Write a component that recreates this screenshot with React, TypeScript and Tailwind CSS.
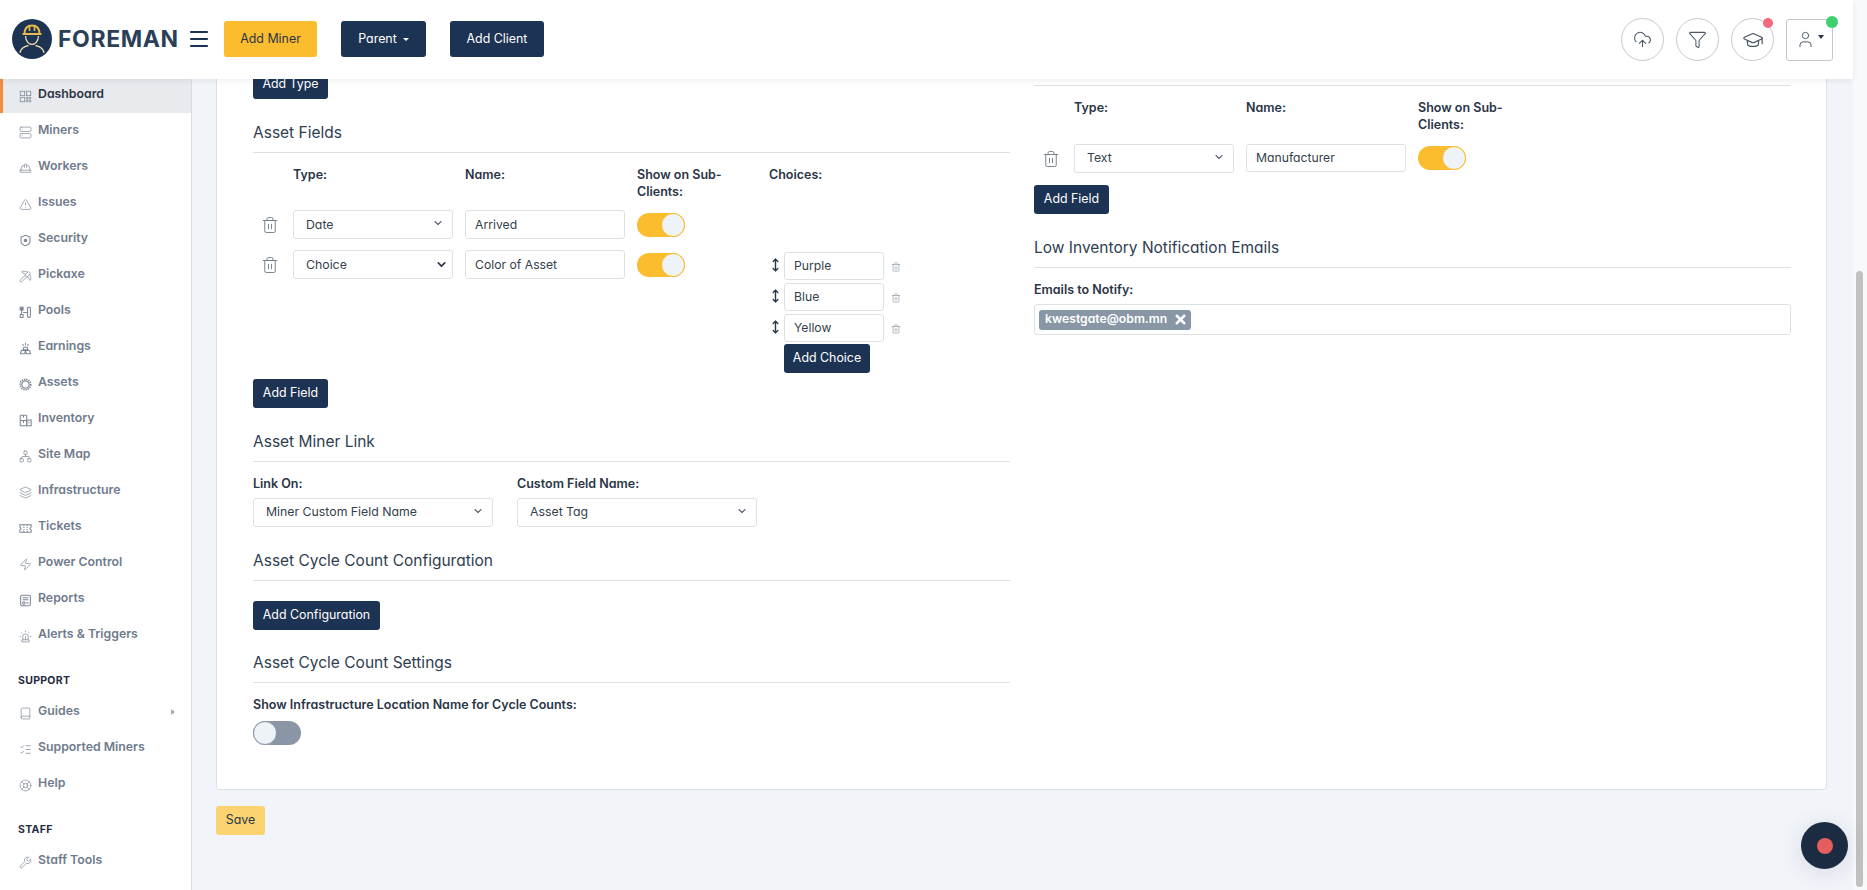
import type { ReactNode } from "react";
import {
  Book,
  ChevronDown,
  CloudUpload,
  Funnel,
  GraduationCap,
  HardHat,
  LifeBuoy,
  ListChecks,
  Menu,
  MoveVertical,
  Network,
  Pickaxe,
  Server,
  Layers,
  Siren,
  Trash2,
  TriangleAlert,
  User,
  Wrench,
  X,
  Zap,
} from "lucide-react";

type IconProps = { size?: number; strokeWidth?: number; className?: string };

function Glyph({ size = 14, strokeWidth = 1.2, className, children }: IconProps & { children: ReactNode }) {
  return (
    <svg width={size} height={size} viewBox="0 0 16 16" fill="none" stroke="currentColor" strokeWidth={strokeWidth} className={className}>
      {children}
    </svg>
  );
}

const DashboardIcon = (p: IconProps) => (
  <Glyph {...p} strokeWidth={0.9}>
    <rect x="1.500" y="1.500" width="5.500" height="5.500" />
    <rect x="9" y="1.500" width="5.500" height="5.500" />
    <rect x="1.500" y="9" width="5.500" height="5.500" />
    <path d="M9 9h2v2H9zM12.500 9h2v2h-2zM9 12.500h2v2H9zM12.500 12.500h2v2h-2z" />
  </Glyph>
);

const ShieldDotIcon = (p: IconProps) => (
  <Glyph {...p}>
    <path d="M8 1.500l5.500 2.300v5.200c0 2.500-2.500 4.500-5.500 5.500-3-1-5.500-3-5.500-5.500V3.800z" />
    <circle cx="8" cy="8" r="1.600" fill="currentColor" />
  </Glyph>
);

const PoolsIcon = (p: IconProps) => (
  <Glyph {...p}>
    <rect x="1.500" y="1.500" width="3.500" height="3.500" fill="currentColor" />
    <rect x="1.500" y="10.500" width="3.500" height="3.500" />
    <rect x="10.500" y="1.500" width="3.500" height="12.500" rx="1" />
    <path d="M3.200 5v5.500M5 8h5.500" />
  </Glyph>
);

const EarningsIcon = (p: IconProps) => (
  <Glyph {...p}>
    <path d="M6 6.500h4l1 3H5zM2.800 10.500h5l-.8 4H1.800zM8.200 10.500h5l1 4H9z" />
    <path d="M8 1v3M4.500 2.500l1 2M11.500 2.500l-1 2" />
  </Glyph>
);

const AssetsIcon = (p: IconProps) => (
  <Glyph {...p}>
    <circle cx="8" cy="8" r="4.500" strokeWidth={1.400} />
    <circle cx="8" cy="8" r="6.500" strokeWidth={2} strokeDasharray="1.600 1.200" />
  </Glyph>
);

const InventoryIcon = (p: IconProps) => (
  <Glyph {...p}>
    <rect x="1.500" y="1.500" width="8" height="13" rx="0.800" />
    <path d="M1.500 8h8M5.500 1.500v3M5.500 8v3" />
    <rect x="9.500" y="7.500" width="5.500" height="7" />
    <path d="M12.200 9.500v2" />
  </Glyph>
);

const TicketIcon = (p: IconProps) => (
  <Glyph {...p}>
    <path d="M1 3.500h14v2.500l-1.500 2 1.500 2v2.500H1V10l1.500-2L1 6z" />
    <path d="M6 3.500v9M10 3.500v9" strokeDasharray="1.500 1" />
  </Glyph>
);

const ReportsIcon = (p: IconProps) => (
  <Glyph {...p}>
    <rect x="2" y="1.500" width="12" height="13" rx="1.500" />
    <path d="M4.500 4.500h7M4.500 7h7" />
    <circle cx="6" cy="11" r="1.500" />
    <path d="M9 11h3" />
  </Glyph>
);

const mainNav = [
  { label: "Dashboard", icon: DashboardIcon, active: true },
  { label: "Miners", icon: Server },
  { label: "Workers", icon: HardHat },
  { label: "Issues", icon: TriangleAlert },
  { label: "Security", icon: ShieldDotIcon },
  { label: "Pickaxe", icon: Pickaxe },
  { label: "Pools", icon: PoolsIcon },
  { label: "Earnings", icon: EarningsIcon },
  { label: "Assets", icon: AssetsIcon },
  { label: "Inventory", icon: InventoryIcon },
  { label: "Site Map", icon: Network },
  { label: "Infrastructure", icon: Layers },
  { label: "Tickets", icon: TicketIcon },
  { label: "Power Control", icon: Zap },
  { label: "Reports", icon: ReportsIcon },
  { label: "Alerts & Triggers", icon: Siren },
];

function NavItem({ label, icon: Icon, active, caret }: { label: string; icon: (p: IconProps) => ReactNode; active?: boolean; caret?: boolean }) {
  return (
    <div
      className={
        active
          ? "flex h-[36px] items-center border-l-[3px] border-[#f58b3c] bg-[#e8eaee] pr-[16px] pl-[16px] text-[#2a3547]"
          : "flex h-[36px] items-center pr-[16px] pl-[19px] text-[#6f7b8c]"
      }
    >
      <Icon size={13} strokeWidth={1.3} className="mt-[2px] shrink-0 text-[#7d8896]" />
      <span className="ml-[6px] flex-1 pb-[1px] text-[12.3px] leading-none font-semibold">{label}</span>
      {caret && <span className="h-0 w-0 border-y-[3px] border-l-[4px] border-y-transparent border-l-[#a3acb8]" />}
    </div>
  );
}

function NavTitle({ children }: { children: ReactNode }) {
  return <div className="mt-[21px] mb-[6px] pl-[18px] text-[10.5px] leading-[14px] font-bold tracking-[0.3px] text-[#1f2d40]">{children}</div>;
}

function Sidebar() {
  return (
    <aside className="h-full w-[192px] shrink-0 overflow-hidden border-r border-[#d9dde3] bg-white">
      <div className="-mt-[2px]">
        {mainNav.map((item) => (
          <NavItem key={item.label} {...item} />
        ))}
        <NavTitle>SUPPORT</NavTitle>
        <NavItem label="Guides" icon={Book} caret />
        <NavItem label="Supported Miners" icon={ListChecks} />
        <NavItem label="Help" icon={LifeBuoy} />
        <NavTitle>STAFF</NavTitle>
        <NavItem label="Staff Tools" icon={Wrench} />
      </div>
    </aside>
  );
}

function Logo() {
  return (
    <svg width="40" height="40" viewBox="0 0 40 40" className="-mt-[1px] shrink-0">
      <circle cx="20" cy="20" r="20" fill="#1c3354" />
      <path d="M10.500 15h19M12.500 15c0-5.500 3-8.500 7.500-8.500s7.500 3 7.500 8.500" fill="none" stroke="#e9b949" strokeWidth="2" />
      <path d="M17.500 7v5M22.500 7v5" stroke="#e9b949" strokeWidth="1.600" />
      <path d="M13.500 17c.3 5 3 8.500 6.500 8.500s6.200-3.500 6.500-8.500" fill="none" stroke="#e9d9a8" strokeWidth="1.300" />
      <path d="M8 34c.5-4.500 4-6.500 8.500-7.500M32 34c-.5-4.500-4-6.500-8.500-7.500" fill="none" stroke="#e9d9a8" strokeWidth="1.300" />
    </svg>
  );
}

function Button({ children, tone = "navy", className = "" }: { children: ReactNode; tone?: "navy" | "yellow" | "save"; className?: string }) {
  const tones = {
    navy: "bg-[#1c3354] text-white",
    yellow: "bg-[#fbbc2e] text-[#2a3547]",
    save: "bg-[#fbd370] text-[#2a3547]",
  };
  return <button className={`flex items-center justify-center rounded-[3px] text-[12.4px] leading-none ${tones[tone]} ${className}`}>{children}</button>;
}

function RoundIcon({ children, dot }: { children: ReactNode; dot?: boolean }) {
  return (
    <div className="relative flex h-[43px] w-[43px] items-center justify-center rounded-full border border-[#c5c9cf] text-[#4a5565]">
      {children}
      {dot && <span className="absolute -top-[1px] right-[0px] h-[10px] w-[10px] rounded-full bg-[#f4697b]" />}
    </div>
  );
}

function Header() {
  return (
    <header className="relative z-10 flex h-[79px] shrink-0 items-center bg-white pl-[12px] shadow-[0_2px_6px_rgba(30,50,80,0.08)]">
      <Logo />
      <span className="ml-[6px] -mt-[1px] w-[122px] text-[23px] leading-none font-bold tracking-[0.6px] text-[#2b3f59]">FOREMAN</span>
      <Menu size={24} strokeWidth={2.2} className="ml-[7px] -mt-[1px] text-[#1c3354]" />
      <Button tone="yellow" className="ml-[13px] -mt-[1px] h-[36px] w-[93px]">Add Miner</Button>
      <Button className="ml-[24px] -mt-[1px] h-[36px] w-[85px] gap-[6px]">
        Parent
        <span className="h-0 w-0 border-x-[3px] border-t-[3px] border-x-transparent border-t-white" />
      </Button>
      <Button className="ml-[24px] -mt-[1px] h-[36px] w-[94px]">Add Client</Button>
      <div className="ml-auto flex items-center gap-[12px] pr-[20px]">
        <RoundIcon>
          <CloudUpload size={19} strokeWidth={1.3} />
        </RoundIcon>
        <RoundIcon>
          <Funnel size={19} strokeWidth={1.3} />
        </RoundIcon>
        <RoundIcon dot>
          <GraduationCap size={22} strokeWidth={1.3} />
        </RoundIcon>
        <div className="relative flex h-[42px] w-[47px] items-center justify-center gap-[3px] rounded-[3px] border border-[#c5c9cf] text-[#4a5565]">
          <User size={19} strokeWidth={1.2} />
          <span className="mb-[6px] h-0 w-0 border-x-[3px] border-t-[4px] border-x-transparent border-t-[#2a3547]" />
          <span className="absolute -top-[4px] -right-[6px] h-[12px] w-[12px] rounded-full bg-[#3ecf6f]" />
        </div>
      </div>
    </header>
  );
}

function SectionTitle({ children, className = "mt-[22px]" }: { children: ReactNode; className?: string }) {
  return <h3 className={`border-b border-[#dde1e6] pb-[8px] text-[15.5px] leading-[23px] font-normal text-[#2f3d50] ${className}`}>{children}</h3>;
}

function Label({ children, className = "" }: { children: ReactNode; className?: string }) {
  return <div className={`text-[12.5px] leading-[17px] font-semibold text-[#2a3547] ${className}`}>{children}</div>;
}

function SelectBox({ value, width = "w-[160px]", strong, tight }: { value: string; width?: string; strong?: boolean; tight?: boolean }) {
  return (
    <div className={`flex h-[29px] items-center justify-between rounded-[3px] border border-[#dde1e6] bg-white pl-[12px] text-[12.3px] text-[#333f4d] ${width} ${strong ? "pr-[4px]" : "pr-[8px]"}`}>
      <span className={tight ? "pb-[1px]" : "pt-[1px]"}>{value}</span>
      <ChevronDown size={strong ? 13 : 12} strokeWidth={strong ? 3 : 2.2} className={strong ? "text-[#2a3547]" : "-mt-[3px] text-[#5a6572]"} />
    </div>
  );
}

function TextBox({ value, className = "h-[29px] w-[160px]" }: { value: string; className?: string }) {
  return <div className={`flex items-center rounded-[3px] border border-[#dde1e6] bg-white pt-[1px] pl-[9px] text-[12.2px] text-[#333f4d] ${className}`}>{value}</div>;
}

function Toggle({ on }: { on?: boolean }) {
  return on ? (
    <div className="flex h-[24px] w-[48px] justify-end rounded-full bg-[#fbbc2e]">
      <span className="h-[24px] w-[24px] rounded-full border border-[#fbbc2e] bg-[#eef3f8]" />
    </div>
  ) : (
    <div className="flex h-[24px] w-[48px] rounded-full bg-[#8a95a5]">
      <span className="h-[24px] w-[24px] rounded-full border border-[#8a95a5] bg-[#eef3f8]" />
    </div>
  );
}

function TrashCell() {
  return (
    <div className="flex h-[29px] w-[40px] shrink-0 items-center pl-[8px]">
      <Trash2 size={18} strokeWidth={1.2} className="text-[#6b7785]" />
    </div>
  );
}

function FieldLabels({ choices }: { choices?: boolean }) {
  return (
    <div className="flex gap-[12px] pt-[13px] pl-[40px]">
      <Label className="w-[160px]">Type:</Label>
      <Label className="w-[160px]">Name:</Label>
      <Label className="w-[120px]">Show on Sub-Clients:</Label>
      {choices && <Label>Choices:</Label>}
    </div>
  );
}

function ChoiceRow({ value }: { value: string }) {
  return (
    <div className="flex items-center">
      <MoveVertical size={14} strokeWidth={2.4} className="-mt-[2px] -ml-[1px] mr-[1px] w-[15px] shrink-0 text-[#2a3547]" />
      <TextBox value={value} className="h-[28px] w-[100px]" />
      <Trash2 size={10} strokeWidth={1.8} className="mt-[2px] ml-[7px] text-[#9aa5b1]" />
    </div>
  );
}

function LeftColumn() {
  return (
    <div className="w-[757px]">
      <Button className="h-[29px] w-[75px]">Add Type</Button>

      <SectionTitle>Asset Fields</SectionTitle>
      <FieldLabels choices />
      <div className="mt-[10px] flex gap-[12px]">
        <div className="-mr-[12px] flex">
          <TrashCell />
        </div>
        <SelectBox value="Date" />
        <TextBox value="Arrived" />
        <div className="pt-[3px]">
          <Toggle on />
        </div>
      </div>
      <div className="mt-[11px] flex gap-[12px]">
        <div className="-mr-[12px] flex">
          <TrashCell />
        </div>
        <SelectBox value="Choice" strong />
        <TextBox value="Color of Asset" />
        <div className="w-[120px] pt-[3px]">
          <Toggle on />
        </div>
        <div className="pt-[2px]">
          <div className="flex flex-col gap-[3px]">
            <ChoiceRow value="Purple" />
            <ChoiceRow value="Blue" />
            <ChoiceRow value="Yellow" />
          </div>
          <Button className="mt-[2px] ml-[15px] h-[29px] w-[86px]">Add Choice</Button>
        </div>
      </div>
      <Button className="mt-[6px] h-[29px] w-[75px]">Add Field</Button>

      <SectionTitle>Asset Miner Link</SectionTitle>
      <div className="flex gap-[24px] pt-[13px]">
        <div>
          <Label className="mb-[6px]">Link On:</Label>
          <SelectBox value="Miner Custom Field Name" width="w-[240px]" tight />
        </div>
        <div>
          <Label className="mb-[6px]">Custom Field Name:</Label>
          <SelectBox value="Asset Tag" width="w-[240px]" tight />
        </div>
      </div>

      <SectionTitle>Asset Cycle Count Configuration</SectionTitle>
      <Button className="mt-[20px] h-[29px] w-[127px]">Add Configuration</Button>

      <SectionTitle className="mt-[21px]">Asset Cycle Count Settings</SectionTitle>
      <Label className="mt-[13px] mb-[8px]">Show Infrastructure Location Name for Cycle Counts:</Label>
      <Toggle />
    </div>
  );
}

function RightColumn() {
  return (
    <div className="w-[757px] pt-[15px]">
      <div className="border-t border-[#dde1e6]" />
      <FieldLabels />
      <div className="mt-[11px] flex gap-[12px]">
        <div className="-mr-[12px] flex">
          <TrashCell />
        </div>
        <SelectBox value="Text" tight />
        <TextBox value="Manufacturer" className="h-[28px] w-[160px]" />
        <div className="pt-[2px]">
          <Toggle on />
        </div>
      </div>
      <Button className="mt-[12px] h-[29px] w-[75px]">Add Field</Button>

      <SectionTitle>Low Inventory Notification Emails</SectionTitle>
      <Label className="mt-[13px] mb-[6px]">Emails to Notify:</Label>
      <div className="flex h-[31px] items-center rounded-[3px] border border-[#dde1e6] bg-white pl-[4px]">
        <span className="flex h-[20px] items-center gap-[6px] rounded-[3px] bg-[#8896a5] pr-[3px] pb-[1px] pl-[6px] text-[12.2px] font-semibold text-white">
          kwestgate@obm.mn
          <X size={15} strokeWidth={4} />
        </span>
      </div>
    </div>
  );
}

export default function App() {
  return (
    <div className="relative flex h-[890px] w-[1867px] overflow-hidden bg-[#f1f4f9] [font-family:Inter,'Noto_Sans',sans-serif] [font-feature-settings:'cv11']">
      <div className="flex min-w-0 flex-1 flex-col">
        <Header />
        <div className="flex min-h-0 flex-1">
          <Sidebar />
          <main className="min-w-0 flex-1 overflow-hidden pr-[26px] pl-[24px]">
            <section className="-mt-[20px] flex h-[731px] gap-[24px] rounded-[4px] border border-[#dde1e6] bg-white pt-[10px] pl-[36px]">
              <LeftColumn />
              <RightColumn />
            </section>
            <Button tone="save" className="mt-[16px] h-[29px] w-[49px]">Save</Button>
          </main>
        </div>
      </div>
      {/* scrollbar */}
      <div className="flex w-[14px] shrink-0 flex-col bg-[#f8f9fb] pt-[271px] pr-[4px] pb-[3px] pl-[3px]">
        <div className="flex-1 rounded-full bg-[#c1c1c1]" />
      </div>
      <div className="absolute top-[822px] left-[1801px] z-20 flex h-[47px] w-[47px] items-center justify-center rounded-full bg-[#1b2b42] shadow-[0_4px_24px_rgba(30,50,80,0.12)]">
        <span className="h-[16px] w-[16px] rounded-full bg-[#e55e5e]" />
      </div>
    </div>
  );
}
